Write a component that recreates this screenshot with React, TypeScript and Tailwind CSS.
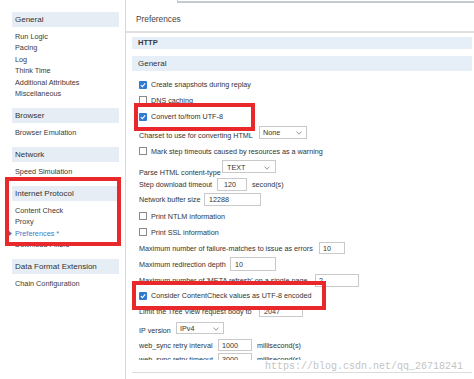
import React from "react";

const Check = () => (
  <span className="w-[8px] h-[8px] shrink-0 bg-[#2f7bd0] rounded-[1px] flex items-center justify-center">
    <svg width="6" height="6" viewBox="0 0 6 6">
      <path d="M0.8 3.1 L2.4 4.6 L5.2 1.3" stroke="#fff" strokeWidth="1.1" fill="none" />
    </svg>
  </span>
);

const Box = () => <span className="w-[8px] h-[8px] shrink-0 border border-[#8a8a8a] bg-white" />;

const Chev = () => (
  <svg width="6" height="4" viewBox="0 0 6 4">
    <path d="M0.5 0.6 L3 3.2 L5.5 0.6" stroke="#8a8a8a" strokeWidth="0.9" fill="none" />
  </svg>
);

const leftSections: { title: string; items: string[] }[] = [
  { title: "General", items: ["Run Logic", "Pacing", "Log", "Think Time", "Additional Attributes", "Miscellaneous"] },
  { title: "Browser", items: ["Browser Emulation"] },
  { title: "Network", items: ["Speed Simulation"] },
  { title: "Internet Protocol", items: ["Content Check", "Proxy", "Preferences *", "Download Filters"] },
  { title: "Data Format Extension", items: ["Chain Configuration"] },
];

export default function App() {
  return (
    <div className="relative w-[474px] h-[379px] overflow-hidden bg-white flex font-[family-name:Liberation_Sans,Arial,sans-serif] text-[#333]">
      {/* Left navigation */}
      <div className="w-[126px] shrink-0 border-r border-[#d8d8d8] pt-[12px] pl-[12px] pr-[6px] flex flex-col">
        {leftSections.map((s) => (
          <div key={s.title} className="mb-[4.6px]">
            <div className="h-[15px] bg-[#e7edf5] pl-[3px] flex items-center text-[8px] text-[#333] whitespace-nowrap">
              {s.title}
            </div>
            <div className="pt-[4px] pb-[4px] pl-[3px] text-[7.3px] leading-[11.4px] text-[#3a3a3a]">
              {s.items.map((it) =>
                it === "Preferences *" ? (
                  <div key={it} className="flex items-center -ml-[6px] whitespace-nowrap text-[#3f7bc9]">
                    <svg width="3" height="5" viewBox="0 0 3 5" className="mr-[3px]">
                      <path d="M0 0 L3 2.5 L0 5 Z" fill="#4a72a8" />
                    </svg>
                    {it}
                  </div>
                ) : (
                  <div key={it} className="whitespace-nowrap">
                    {it}
                  </div>
                )
              )}
            </div>
          </div>
        ))}
      </div>

      {/* Right panel */}
      <div className="flex-1 flex flex-col min-w-0">
        <div className="h-[3px] flex">
          <div className="ml-[51px] flex-1 border-l border-b-2 border-[#c4cad2]" />
        </div>
        <div className="h-[30px] pt-[4px] pl-[10px] flex items-center text-[8.3px] text-[#444] border-b-2 border-[#e0e0e0]">
          Preferences
        </div>
        <div className="pl-[6px] pr-[2px]">
          <div className="mt-[4px] h-[12px] bg-[#e6eef8] pl-[6px] flex items-center text-[7.6px] font-bold text-[#3a3a3a]">HTTP</div>
          <div className="mt-[7px] h-[15px] bg-[#e6eef8] pl-[6px] flex items-center text-[8px] text-[#333]">General</div>
          <div className="mt-[6px] h-[283px] overflow-hidden pl-[7px] text-[7.2px] leading-[9px] text-[#333] whitespace-nowrap">
            <div className="h-[15px] flex items-center">
              <Check />
              <span className="ml-[4px]">Create snapshots during replay</span>
            </div>
            <div className="h-[16px] flex items-center">
              <Box />
              <span className="ml-[4px]">DNS caching</span>
            </div>
            <div className="h-[17px] flex items-center">
              <Check />
              <span className="ml-[4px]">Convert to/from UTF-8</span>
            </div>
            <div className="h-[18px] flex items-start">
              <span className="w-[120px] mt-[5.5px]">Charset to use for converting HTML</span>
              <span className="mt-[1px] h-[13px] w-[48px] border border-[#c9c9c9] bg-white flex items-start justify-between pl-[3px] pr-[4px] pt-[1px]">
                None
                <span className="mt-[3px]"><Chev /></span>
              </span>
            </div>
            <div className="h-[16px] flex items-center">
              <Box />
              <span className="ml-[4px]">Mark step timeouts caused by resources as a warning</span>
            </div>
            <div className="h-[18px] flex items-start">
              <span className="w-[83px] mt-[8.5px]">Parse HTML content-type</span>
              <span className="mt-[1px] h-[13px] w-[54px] border border-[#c9c9c9] bg-white flex items-start justify-between pl-[4px] pr-[5px] pt-[1.5px]">
                TEXT
                <span className="mt-[3px]"><Chev /></span>
              </span>
            </div>
            <div className="h-[14px] flex items-center">
              <span className="w-[78px]">Step download timeout</span>
              <span className="h-[13px] w-[30px] border border-[#c9c9c9] bg-white flex items-center pl-[6px]">120</span>
              <span className="ml-[5px]">second(s)</span>
            </div>
            <div className="h-[17px] flex items-center">
              <span className="w-[65px]">Network buffer size</span>
              <span className="h-[13px] w-[57px] border border-[#c9c9c9] bg-white flex items-center pl-[4px]">12288</span>
            </div>
            <div className="h-[16px] flex items-center">
              <Box />
              <span className="ml-[4px]">Print NTLM information</span>
            </div>
            <div className="h-[16px] flex items-center">
              <Box />
              <span className="ml-[4px]">Print SSL information</span>
            </div>
            <div className="h-[16px] flex items-center">
              <span className="w-[180px]">Maximum number of failure-matches to issue as errors</span>
              <span className="h-[12px] w-[26px] border border-[#c9c9c9] bg-white flex items-center pl-[3px]">10</span>
            </div>
            <div className="h-[16px] flex items-center">
              <span className="w-[91px]">Maximum redirection depth</span>
              <span className="h-[14px] w-[46px] border border-[#c9c9c9] bg-white flex items-center pl-[4px]">10</span>
            </div>
            <div className="h-[16px] flex items-center">
              <span className="w-[176px]">Maximum number of &apos;META refresh&apos; on a single page</span>
              <span className="h-[13px] w-[44px] border border-[#c9c9c9] bg-white flex items-center pl-[3px]">2</span>
            </div>
            <div className="h-[15px] flex items-center">
              <Check />
              <span className="ml-[4px]">Consider ContentCheck values as UTF-8 encoded</span>
            </div>
            <div className="h-[17px] flex items-center">
              <span className="w-[120px]">Limit the Tree View request body to</span>
              <span className="h-[11px] w-[44px] border border-[#c9c9c9] bg-white flex items-center pl-[4px]">2047</span>
            </div>
            <div className="h-[18px] flex items-start">
              <span className="w-[37px] mt-[5.5px]">IP version</span>
              <span className="mt-[2px] h-[12px] w-[48px] border border-[#c9c9c9] bg-white flex items-start justify-between pl-[3px] pr-[4px] pt-[1px]">
                IPv4
                <span className="mt-[3px]"><Chev /></span>
              </span>
            </div>
            <div className="h-[14px] flex items-center">
              <span className="w-[79px]">web_sync retry interval</span>
              <span className="h-[12px] w-[34px] border border-[#c9c9c9] bg-white flex items-center pl-[3px]">1000</span>
              <span className="ml-[5px]">millisecond(s)</span>
            </div>
            <div className="h-[14px] flex items-center">
              <span className="w-[79px]">web_sync retry timeout</span>
              <span className="h-[12px] w-[34px] border border-[#c9c9c9] bg-white flex items-center pl-[3px]">3000</span>
              <span className="ml-[5px]">millisecond(s)</span>
            </div>
          </div>
          <div className="mt-[12px] border-t border-[#dcdcdc]" />
        </div>
      </div>

      {/* Red annotation boxes */}
      <div className="absolute left-[134px] top-[103px] w-[121px] h-[28px] border-[4px] border-[#e8282b]" />
      <div className="absolute left-[132px] top-[281px] w-[194px] h-[29px] border-[4px] border-[#e8282b]" />
      <div className="absolute left-[5px] top-[177px] w-[116px] h-[69px] border-[4px] border-[#e8282b]" />

      {/* Watermark */}
      <div className="absolute left-[265px] top-[361px] text-[10px] leading-[12px] font-[family-name:Liberation_Mono,monospace] text-[#c4c4c4] whitespace-nowrap">
        https://blog.csdn.net/qq_26718241
      </div>
    </div>
  );
}
